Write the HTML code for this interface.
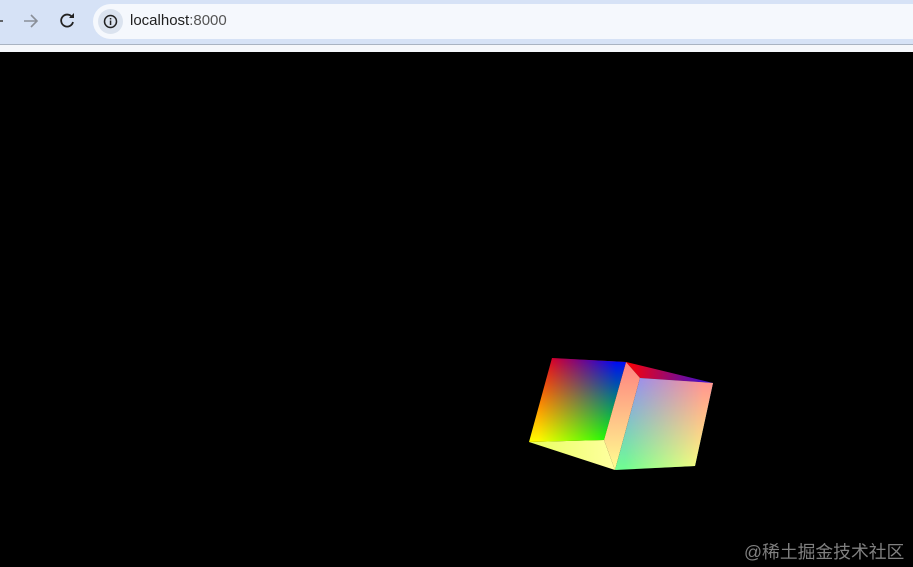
<!DOCTYPE html>
<html><head><meta charset="utf-8"><style>
html,body{margin:0;padding:0;width:913px;height:567px;overflow:hidden;background:#000;font-family:"Liberation Sans","Noto Sans CJK SC",sans-serif}
.bar{position:absolute;left:0;top:0;width:913px;height:44px;background:#d6e2f6;border-bottom:1px solid #a9b3c2}
.strip{position:absolute;left:0;top:45px;width:913px;height:7px;background:#f5f7fb}
.addr{position:absolute;left:93px;top:4px;width:840px;height:35px;border-radius:18px;background:#f5f8fd}
.info{position:absolute;left:98px;top:9px;width:25px;height:25px;border-radius:50%;background:#dbe3ef}
.url{position:absolute;left:130px;top:12px;font-size:15px;color:#1f1f1f}
.url span{color:#555}
.wm{position:absolute;left:744px;top:538px;font-size:17.8px;color:#808080}
</style></head><body>
<div class="bar"></div><div class="strip"></div>
<div class="addr"></div>
<svg style="position:absolute;left:0;top:0" width="90" height="44">
<path d="M0 21H3" stroke="#444" stroke-width="1.6"/>
<path d="M24 21H37M31 15L37 21L31 27" stroke="#8a8f98" stroke-width="1.6" fill="none"/>
<path d="M72 17A6 6 0 1 0 73 22" stroke="#222" stroke-width="1.8" fill="none"/><path d="M74 13V18H69Z" fill="#222"/>
</svg>
<div class="info"></div>
<svg style="position:absolute;left:103px;top:14px" width="15" height="15"><circle cx="7.5" cy="7.5" r="6" stroke="#222" stroke-width="1.5" fill="none"/><rect x="6.8" y="6.5" width="1.5" height="4.5" fill="#222"/><rect x="6.8" y="4" width="1.5" height="1.5" fill="#222"/></svg>
<div class="url">localhost<span>:8000</span></div>
<svg style="position:absolute;left:0;top:0" width="913" height="567">
<defs>
<linearGradient id="hx" x1="0" y1="0" x2="1" y2="0"><stop offset="0.1" stop-color="#fff" stop-opacity="0"/><stop offset="0.9" stop-color="#fff" stop-opacity="1"/></linearGradient>
<mask id="mh" maskContentUnits="objectBoundingBox"><rect width="1" height="1" fill="url(#hx)"/></mask>
<linearGradient id="lL" x1="0" y1="0" x2="0" y2="1"><stop offset="0" stop-color="#f00"/><stop offset="1" stop-color="#ff0"/></linearGradient>
<linearGradient id="lR" x1="0" y1="0" x2="0" y2="1"><stop offset="0" stop-color="#00f"/><stop offset="1" stop-color="#0f0"/></linearGradient>
<linearGradient id="rL" x1="0" y1="0" x2="0" y2="1"><stop offset="0" stop-color="#8890ff"/><stop offset="1" stop-color="#70ff90"/></linearGradient>
<linearGradient id="rR" x1="0" y1="0" x2="0" y2="1"><stop offset="0" stop-color="#ff9090"/><stop offset="1" stop-color="#ffff80"/></linearGradient>
<linearGradient id="gt" x1="0" y1="0" x2="1" y2="0"><stop offset="0" stop-color="#f00"/><stop offset="1" stop-color="#3010e0"/></linearGradient>
<linearGradient id="gp" x1="0" y1="0" x2="0" y2="1"><stop offset="0" stop-color="#ff8080"/><stop offset="1" stop-color="#ffff90"/></linearGradient>
<linearGradient id="gb" x1="0" y1="0" x2="1" y2="0"><stop offset="0" stop-color="#e8ff60"/><stop offset="1" stop-color="#ffffa0"/></linearGradient>
</defs>
<polygon points="626,362 713,383 640,378" fill="url(#gt)"/>
<polygon points="529,442 604,440 615,470" fill="url(#gb)"/>
<polygon points="626,362 640,378 615,470 604,440" fill="url(#gp)"/>
<polygon points="640,378 713,383 695,466 615,470" fill="url(#rL)"/>
<polygon points="640,378 713,383 695,466 615,470" fill="url(#rR)" mask="url(#mh)"/>
<polygon points="552,358 626,362 604,440 529,442" fill="url(#lL)"/>
<polygon points="552,358 626,362 604,440 529,442" fill="url(#lR)" mask="url(#mh)"/>
</svg>
<div class="wm">@稀土掘金技术社区</div>
</body></html>
